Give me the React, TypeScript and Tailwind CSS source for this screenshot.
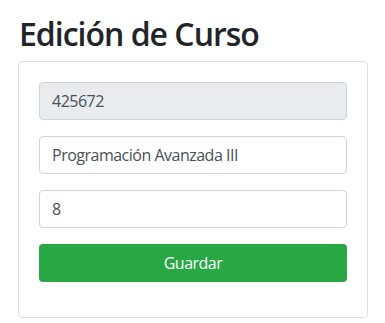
export default function App() {
  return (
    <div className="bg-white min-h-screen pl-[18px] pt-[15px]" style={{ fontFamily: '"Open Sans", "Noto Sans", sans-serif' }}>
      <h2 className="text-[32px] leading-[1.2] font-semibold text-[#212529] mb-2 pl-[1px] tracking-[-1px]">Edición de Curso</h2>
      <div className="w-[350px] h-[257px] border border-[#dfdfdf] rounded-[4px] p-5 flex flex-col gap-4 tracking-[-0.5px]">
        <div className="h-[38px] rounded-[4px] border border-[#ced4da] bg-[#e9ecef] px-3 flex items-center text-base text-[#495057]">425672</div>
        <div className="h-[38px] rounded-[4px] border border-[#ced4da] bg-white px-3 flex items-center text-base text-[#495057]">Programación Avanzada III</div>
        <div className="h-[38px] rounded-[4px] border border-[#ced4da] bg-white px-3 flex items-center text-base text-[#495057]">8</div>
        <button className="h-[38px] rounded-[4px] bg-[#28a745] text-white text-base flex items-center justify-center">Guardar</button>
      </div>
    </div>
  );
}
